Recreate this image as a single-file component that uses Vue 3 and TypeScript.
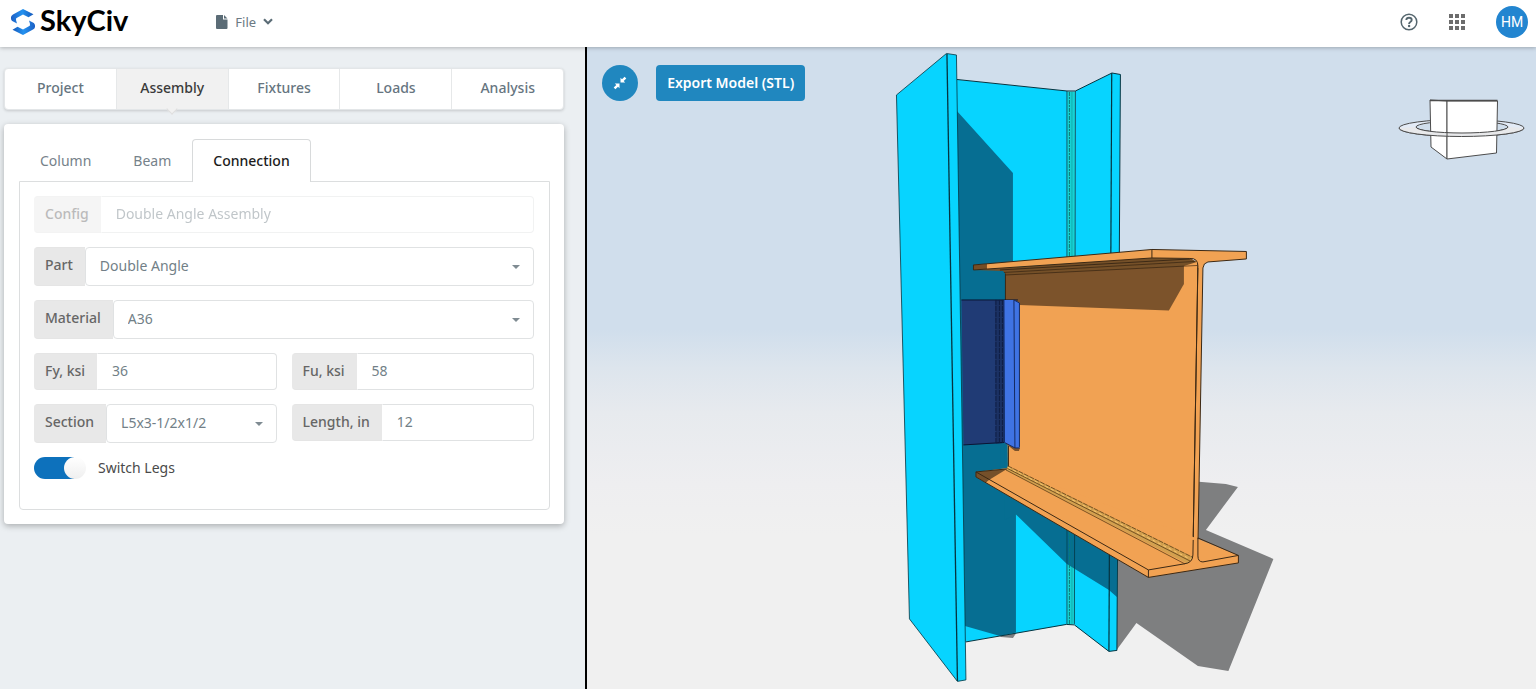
<script setup lang="ts">
import { ref } from 'vue'

const mainTabs = ['Project', 'Assembly', 'Fixtures', 'Loads', 'Analysis']
const subTabs = ['Column', 'Beam', 'Connection']
const activeMain = ref('Assembly')
const activeSub = ref('Connection')

const config = ref('Double Angle Assembly')
const part = ref('Double Angle')
const material = ref('A36')
const fy = ref('36')
const fu = ref('58')
const section = ref('L5x3-1/2x1/2')
const length = ref('12')
const switchLegs = ref(true)
</script>

<template>
  <div class="app">
    <header class="topbar">
      <a class="brand" href="#" aria-label="SkyCiv">
        <svg class="brand-mark" viewBox="0 0 24 26" aria-hidden="true">
          <defs>
            <linearGradient id="mark-top" x1="0" x2="1">
              <stop offset="0" stop-color="#1c5fc4" />
              <stop offset="0.5" stop-color="#2492f0" />
              <stop offset="1" stop-color="#1558ba" />
            </linearGradient>
            <linearGradient id="mark-bottom" x1="0" x2="1">
              <stop offset="0" stop-color="#1558ba" />
              <stop offset="0.5" stop-color="#2492f0" />
              <stop offset="1" stop-color="#1c5fc4" />
            </linearGradient>
          </defs>
          <path fill="url(#mark-top)" d="M12 0 L22.500 5.200 L17.500 8.200 L12 5.500 L5.200 9.300 L5 11 L6 14.500 L1.200 12 Q0 11 0 9.500 V8 Q.2 6.500 2 5.400 Z" />
          <path fill="url(#mark-bottom)" d="M12 26 L1.500 20.800 L6.500 17.800 L12 20.500 L18.800 16.700 L19 15 L18 11.500 L22.800 14 Q24 15 24 16.500 V18 Q23.800 19.500 22 20.600 Z" />
        </svg>
        <span class="brand-name">SkyCiv</span>
      </a>
      <button class="file-menu" type="button">
        <svg width="12" height="14" viewBox="0 0 12 14" aria-hidden="true">
          <path fill="#5b6c76" d="M1 0 H7 V4.500 H11.500 V13 Q11.500 14 10.500 14 H1 Q0 14 0 13 V1 Q0 0 1 0 Z M8 0 L11.500 3.500 H8 Z" />
        </svg>
        <span>File</span>
        <svg width="10" height="7" viewBox="0 0 10 7" aria-hidden="true">
          <path fill="none" stroke="#5b6c76" stroke-width="2.200" d="M1 1.200 L5 5.200 L9 1.200" />
        </svg>
      </button>
      <div class="topbar-actions">
        <button class="icon-button" type="button" aria-label="Help">
          <svg width="18" height="18" viewBox="0 0 18 18" aria-hidden="true">
            <circle cx="9" cy="9" r="7.800" fill="none" stroke="#55666e" stroke-width="1.500" />
            <path fill="none" stroke="#55666e" stroke-width="1.900" d="M6.300 7 Q6.500 4.700 9 4.700 Q11.700 4.700 11.700 7 Q11.700 8.200 10.300 9 Q9.100 9.700 9.100 11" />
            <circle cx="9.100" cy="13" r="1.200" fill="#55666e" />
          </svg>
        </button>
        <button class="icon-button" type="button" aria-label="Apps">
          <svg width="18" height="18" viewBox="0 0 18 18" aria-hidden="true">
            <g fill="#6c6c6c">
              <template v-for="row in 3" :key="row">
                <rect v-for="col in 3" :key="col" :x="(col - 1) * 6 + 1" :y="(row - 1) * 6 + 1" width="4" height="4" />
              </template>
            </g>
          </svg>
        </button>
        <button class="avatar" type="button">HM</button>
      </div>
    </header>

    <main class="workspace">
      <section class="panel">
        <nav class="main-tabs">
          <button
            v-for="tab in mainTabs"
            :key="tab"
            type="button"
            :class="{ active: tab === activeMain }"
            @click="activeMain = tab"
          >{{ tab }}</button>
        </nav>

        <div class="card">
          <nav class="sub-tabs">
            <button
              v-for="tab in subTabs"
              :key="tab"
              type="button"
              :class="{ active: tab === activeSub }"
              @click="activeSub = tab"
            >{{ tab }}</button>
          </nav>
          <form class="form" @submit.prevent>
            <div class="field wide disabled">
              <label for="config">Config</label>
              <input id="config" v-model="config" type="text" disabled />
            </div>
            <div class="field wide">
              <label for="part">Part</label>
              <div class="select">
                <select id="part" v-model="part"><option>Double Angle</option></select>
              </div>
            </div>
            <div class="field wide">
              <label for="material">Material</label>
              <div class="select">
                <select id="material" v-model="material"><option>A36</option></select>
              </div>
            </div>
            <div class="field">
              <label for="fy">Fy, ksi</label>
              <input id="fy" v-model="fy" type="text" />
            </div>
            <div class="field">
              <label for="fu">Fu, ksi</label>
              <input id="fu" v-model="fu" type="text" />
            </div>
            <div class="field">
              <label for="section">Section</label>
              <div class="select">
                <select id="section" v-model="section"><option>L5x3-1/2x1/2</option></select>
              </div>
            </div>
            <div class="field">
              <label for="length">Length, in</label>
              <input id="length" v-model="length" type="text" />
            </div>
            <label class="toggle wide">
              <input v-model="switchLegs" type="checkbox" />
              <span>Switch Legs</span>
            </label>
          </form>
        </div>
      </section>

      <section class="viewer">
        <svg class="scene" viewBox="587 47 949 642" preserveAspectRatio="xMidYMin meet" aria-hidden="true">
          <!-- ground shadow -->
          <path fill="#7e7f80" d="M1190 481 L1226 484 L1238 487 L1206 530 L1273.500 559 L1228.500 671 L1198 666 L1136.500 623 L1116 651 L1112 550 Z" />
          <path fill="#7e7f80" d="M998 634 L1001 637 L1013 638 L1017 632 Z" />

          <!-- column web and fillet -->
          <path fill="#07d4ff" d="M956 79.500 L1067 91 V624.500 L965 642 Z" />
          <path fill="#066e92" d="M957 111 L1013 173 V260 L1016 514 V632.500 L1000 636 L965 626 Z" />
          <path fill="#066e92" d="M1005 262 V520 L1015.500 514 L1067 564 V515 L1000 470 Z" />
          <path fill="#16d2d4" d="M1067 91.500 H1075.500 V624.500 H1067 Z" />
          <path fill="#07d4ff" d="M1075.500 91 L1112 73 L1120.500 74.500 L1117 650.500 L1109 651.500 L1074.500 625 Z" />
          <path fill="#066e92" d="M1067 510 H1117 V597 L1109 590 L1075 569 L1067 564 Z" />
          <g fill="none" stroke="#06333f" stroke-width="1">
            <path d="M957 79.500 L1067 91 L1075.500 91 L1112 73 L1120.500 74.500 L1117 650.500 L1109 651.500 L1074.500 625 L1066.500 624.500 L966 642" />
            <path d="M1111.800 73 L1109 651" stroke-width="1.200" />
            <path d="M1067 91 V624 M1075.500 91 L1074.500 624" stroke-opacity=".75" />
          </g>
          <g fill="none" stroke="#087c78" stroke-width="1">
            <path d="M1069.500 92 V624" stroke-dasharray="4 1 2 1" />
            <path d="M1072 92 V624" stroke-opacity=".4" />
          </g>

          <!-- column front flange -->
          <path fill="#07d4ff" d="M896.500 95 L946.500 53.500 L956.500 55 L966 680 L957.500 681.500 L909.500 619 Z" />
          <g fill="none" stroke="#06333f" stroke-width="1">
            <path d="M946.500 53.500 L896.500 95 L909.500 619 L957.500 681.500 L966 680 L956.500 55 Z" stroke-opacity=".8" />
            <path d="M947 54 L957.500 681" stroke-width="1.300" />
          </g>

          <!-- beam web -->
          <path fill="#f1a253" d="M1005.500 270 L1198 261 H1203 L1198 560 L1008 470 Z" />
          <path fill="#7c532b" d="M1005.500 269 L1184 260 V284 L1169 310.500 L1019.500 305 L1005.500 304 Z" />
          <path fill="none" stroke="#3b2814" stroke-width="1" d="M1005.500 272 V300 M1008.500 446 V468 M1198 262 L1193 556" />

          <!-- beam top flange -->
          <path fill="#755028" d="M975 270 L1152 257 L1192 259 L1197 262 L1184 266 L1007 275 L1003 271 Z" />
          <g fill="none" stroke="#2f2010" stroke-width=".8">
            <path d="M1000 270 L1190 259" />
            <path d="M1004 272.500 L1195 261.500" stroke-opacity=".8" />
            <path d="M1006 275 L1198 265.500" stroke-opacity=".8" />
          </g>
          <path fill="#f1a253" d="M973.500 265 L1152 249.500 L1246.500 251.500 V259 L1208 262 Q1203.500 263 1203 268 H1198 Q1198 258 1190 258.500 L1152 258 L973.500 270 Z" />
          <path fill="#774d24" d="M973.500 265 L987 264 V269 L973.500 270 Z" />
          <g fill="none" stroke="#3b2814" stroke-width="1">
            <path d="M973.500 265 L1152 249.500 L1246.500 251.500 V259 L1208 262 Q1203.500 263 1203 268 L1198 548" />
            <path d="M973.500 265 V270 L1152 258 L1190 258.500 Q1198 258 1198 266 L1193 556" />
            <path d="M1152 249.500 V258" />
          </g>

          <!-- double angle -->
          <path fill="#203b75" d="M961.500 300 H1004 V443 L963.500 445 Z" />
          <path fill="#1b3163" d="M995 300 H1004 V443 L996 443.500 Z" />
          <path fill="none" stroke="#091533" stroke-width="1" d="M961.500 300 H1018 M963.500 445 L1004 442.500" />
          <path fill="none" stroke="#0f1e45" stroke-width="1" stroke-dasharray="5 1" d="M996 300 V443 M999.500 300 V443 M1002.500 300 V443" />
          <path fill="#7c532b" d="M1005 443 L1015 451 L1019 451 L1020 448 Z" />
          <path fill="#3f73e4" d="M1004 300 H1014 L1019.500 302.500 V448 H1015 L1004.500 442.500 Z" />
          <path fill="none" stroke="#142a62" stroke-width="1" d="M1004 300 L1004.500 442.500 L1015 448 L1020 448 M1014 300 L1015 448 M1014 300 L1019.500 303 V447" />

          <!-- beam bottom flange -->
          <path fill="#f1a253" d="M1196 538 L1238.500 555.500 V563 L1148.500 577.500 L976 477 V472 L1008 468 Z" />
          <path fill="#75502a" d="M976 472 L1007 469 L989 480 L986 482.500 L976 477 Z" />
          <path fill="#d3a04f" d="M1008 466 L1193 557 L1188 564 L1006 470 Z" />
          <path fill="#f1a253" d="M1193 545 H1198 V556 Q1198 562 1203 562 L1148.500 577 V570 L1184 564 Q1192.500 563 1193 556 Z" />
          <g fill="none" stroke="#5a3d16" stroke-width=".8">
            <path d="M1008 466 L1192 557" stroke-dasharray="5 1" />
            <path d="M1007.500 468.500 L1190 561" />
            <path d="M1006 470 L1185 564" />
            <path d="M1008 467.500 L1191 559.500" stroke="#ffd277" stroke-dasharray="3 3" />
          </g>
          <g fill="none" stroke="#3b2814" stroke-width="1">
            <path d="M1007 469 L976 472 L1148.500 570 L1184 564 Q1193 563 1193 555 L1193.300 540" />
            <path d="M976 472 V477 L1148.500 577.500 L1238.500 563 V555.500 L1203 562 Q1198 562 1198 556 V538 L1238.500 555.500" />
            <path d="M1148.500 570 V577.500" />
          </g>
        </svg>

        <svg class="nav-cube" width="128" height="62" viewBox="0 0 128 62" aria-hidden="true">
          <g stroke="#4c4c4c" stroke-width="1">
            <path fill="#e3ebf6" fill-rule="evenodd" d="M1 29 A62.500 8.500 0 0 1 126 29 A62.500 8.500 0 0 1 1 29 Z M18 28 A46 6 0 0 0 110 28 A46 6 0 0 0 18 28 Z" />
            <path fill="#fff" d="M32 1 L49 2 V60 L33 48 Z" />
            <path fill="#fff" d="M49 2 H99.500 L98.500 54 L49 60 Z" />
            <path fill="none" stroke-width="1.600" d="M32 1.500 H99.500" />
            <path fill="#e8e9eb" d="M1 29 A62.500 8.500 0 0 0 126 29 L110 28 A46 6 0 0 1 18 28 Z" stroke="none" />
            <path fill="none" d="M1 29 A62.500 8.500 0 0 0 126 29 M110 28 A46 6 0 0 1 18 28 M49 33 V37" />
          </g>
        </svg>

        <div class="viewer-tools">
          <button class="collapse" type="button" aria-label="Collapse view">
            <svg width="14" height="14" viewBox="0 0 14 14" aria-hidden="true">
              <path fill="#fff" d="M7.500 1.800 V6.500 H12.200 L10.700 5 L13.300 2.400 L11.600 .7 L9 3.300 Z M6.500 12.200 V7.500 H1.800 L3.300 9 L.7 11.600 L2.400 13.300 L5 10.700 Z" />
            </svg>
          </button>
          <button class="export" type="button">Export Model (STL)</button>
        </div>
      </section>
    </main>
  </div>
</template>

<style>
body {
  margin: 0;
}
</style>

<style scoped>
.app {
  display: flex;
  flex-direction: column;
  min-height: 100vh;
  font: 14px/20px "Noto Sans", "Open Sans", sans-serif;
  color: #5d6b74;
}
.app *,
.app *::before,
.app *::after {
  box-sizing: border-box;
}
button,
input,
select {
  font: inherit;
  color: inherit;
  margin: 0;
}
button {
  border: 0;
  background: none;
  padding: 0;
  cursor: pointer;
}
.topbar {
  position: relative;
  z-index: 2;
  display: flex;
  align-items: center;
  height: 47px;
  padding: 0 8px 0 11px;
  background: #fff;
  box-shadow: 0 1px 4px rgba(0, 0, 0, 0.25);
}
.brand {
  display: flex;
  align-items: center;
  gap: 5px;
  margin-bottom: 4px;
  color: #000;
  text-decoration: none;
}
.brand-mark {
  width: 24px;
  height: 26px;
}
.brand-name {
  font: 700 29px/32px Lato, sans-serif;
  margin-bottom: 4px;
}
.file-menu {
  display: flex;
  align-items: center;
  gap: 7px;
  margin-left: 88px;
  margin-bottom: 4px;
  font-size: 13px;
  color: #6c7a83;
}
.topbar-actions {
  display: flex;
  align-items: center;
  gap: 30px;
  margin-left: auto;
  margin-bottom: 3px;
}
.icon-button {
  display: flex;
}
.avatar {
  width: 32px;
  height: 32px;
  border-radius: 50%;
  background: #2285d0;
  color: #fff;
  font: 14px/32px Roboto, sans-serif;
}
.workspace {
  flex: 1;
  display: grid;
  grid-template-columns: 8fr 13fr;
}
.panel {
  padding: 21px 21px 21px 4px;
  background: #ebeff2;
}
.main-tabs {
  display: flex;
  height: 42px;
  border: 1px solid #e3e6e8;
  border-radius: 4px;
  background: #fff;
  box-shadow: 0 1px 3px rgba(0, 0, 0, 0.16);
}
.main-tabs button {
  position: relative;
  flex: 1;
  padding-bottom: 2px;
  font-weight: 500;
  color: #66757f;
  border-right: 1px solid #e6e8e9;
}
.main-tabs button:last-child {
  border-right: 0;
}
.main-tabs .active {
  background: #f1f1f1;
  color: #3a3a3a;
}
.main-tabs .active::after {
  content: "";
  position: absolute;
  left: 50%;
  bottom: -4px;
  width: 8px;
  height: 8px;
  margin-left: -4px;
  transform: rotate(45deg);
  background: #f1f1f1;
  border: solid #dedede;
  border-width: 0 1px 1px 0;
}
.card {
  margin-top: 14px;
  padding: 15px 14px 14px 15px;
  background: #fff;
  border-radius: 4px;
  box-shadow: 0 2px 6px rgba(0, 0, 0, 0.28);
}
.sub-tabs {
  display: flex;
}
.sub-tabs button {
  height: 43px;
  margin-bottom: -1px;
  padding: 0 20px;
  border: 1px solid transparent;
  border-bottom: 0;
  color: #76828a;
}
.sub-tabs .active {
  position: relative;
  background: #fff;
  border-color: #d8dadb;
  border-radius: 4px 4px 0 0;
  color: #1c1c1c;
  font-weight: 500;
}
.form {
  display: grid;
  grid-template-columns: 1fr 1fr;
  gap: 14px 15px;
  align-items: start;
  padding: 14px 15px 30px 14px;
  border: 1px solid #dcdedf;
  border-radius: 0 0 4px 4px;
}
.wide {
  grid-column: 1 / -1;
}
.field {
  display: flex;
  min-width: 0;
}
.field > label {
  padding: 7px 12px 0 11px;
  background: #e8e8e8;
  border: 1px solid #e5e5e5;
  border-width: 1px 0;
  border-radius: 4px 0 0 4px;
  color: #666;
  font-weight: 500;
  white-space: nowrap;
}
.field input,
.select {
  flex: 1;
  min-width: 0;
  border: 1px solid #e0e2e3;
  background: #fff;
}
.field input {
  height: 37px;
  padding: 0 14px 2px;
  border-left: 1px solid transparent;
  border-radius: 0 4px 4px 0;
}
.field input,
.select select {
  color: #727f87;
}
.select {
  position: relative;
  height: 39px;
  border-radius: 4px;
}
.select::after {
  content: "";
  position: absolute;
  right: 13px;
  top: 17px;
  border: solid transparent;
  border-width: 4px 4px 0;
  border-top-color: #7f8b92;
  pointer-events: none;
}
.select select {
  appearance: none;
  width: 100%;
  height: 100%;
  padding: 0 28px 2px 14px;
  border: 0;
  background: none;
}
.disabled {
  opacity: 0.45;
}
.toggle {
  display: flex;
  align-items: center;
  gap: 12px;
  height: 22px;
  color: #4a4a4a;
}
.toggle input {
  appearance: none;
  display: flex;
  width: 52px;
  height: 22px;
  border-radius: 11px;
  background: #eee;
}
.toggle input:checked {
  justify-content: flex-end;
  background: linear-gradient(90deg, #0d71bc 40px, #fff 40px);
}
.toggle input::before {
  content: "";
  width: 22px;
  height: 22px;
  border-radius: 50%;
  background: linear-gradient(#fff, #efefef);
}
.viewer {
  position: relative;
  overflow: hidden;
  border-left: 2px solid #000;
  background: linear-gradient(#d0deec, #d0deec 44%, #dde5ed 50%, #e7eaee 57%, #eeeef0 68%, #f0f0f0 76%);
}
.scene {
  position: absolute;
  inset: 0;
  width: 100%;
  height: 100%;
}
.nav-cube {
  position: absolute;
  top: 52px;
  right: 10px;
}
.viewer-tools {
  position: relative;
  display: flex;
  gap: 18px;
  padding: 18px 15px;
}
.viewer-tools button {
  height: 36px;
  background: #2087bf;
  color: #fff;
}
.collapse {
  display: flex;
  align-items: center;
  justify-content: center;
  width: 36px;
  border-radius: 50%;
}
.viewer-tools .export {
  padding: 0 11px;
  border-radius: 4px;
  font-weight: 600;
}
</style>
